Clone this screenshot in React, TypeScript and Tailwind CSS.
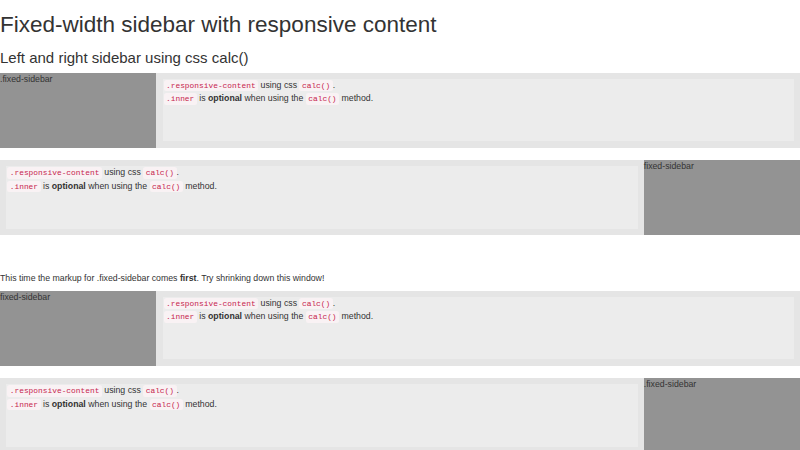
import React from 'react';

const C = ({ children }: { children: React.ReactNode }) => (
    <code className="font-['Liberation_Mono',monospace] text-[7.875px] text-[#c7254e] bg-[#f9f2f4] px-[2.5px] py-[1.25px] rounded-[2.5px]">
        {children}
    </code>
);

function Content() {
    return (
        <div className="flex-1 bg-[#e5e5e5] p-[6.25px]">
            <div className="h-full bg-[#ececec] pl-[1px]">
                <p>
                    <C>.responsive-content</C> using css <C>calc()</C>.
                </p>
                <p>
                    <C>.inner</C> is <b>optional</b> when using the <C>calc()</C> method.
                </p>
            </div>
        </div>
    );
}

function Sidebar({ label }: { label: string }) {
    return <div className="w-[156.25px] shrink-0 bg-[#939393]">{label}</div>;
}

export default function App() {
    return (
        <div className="min-h-[450px] bg-white text-[#333] font-['Liberation_Sans',Arial,sans-serif] text-[8.75px] leading-[12.5px]">
            <h1 className="text-[22.5px] leading-[24.75px] pt-[12.5px] mb-[12.5px]">
                Fixed-width sidebar with responsive content
            </h1>
            <h3 className="text-[15px] leading-[16.5px] mb-[6.25px]">Left and right sidebar using css calc()</h3>

            {/* sidebar on the left */}
            <div className="flex h-[75px] mb-[12.5px]">
                <Sidebar label=".fixed-sidebar" />
                <Content />
            </div>

            {/* sidebar on the right */}
            <div className="flex h-[75px]">
                <Content />
                <Sidebar label="fixed-sidebar" />
            </div>

            <p className="mt-[36.75px] mb-[6.25px]">
                This time the markup for .fixed-sidebar comes <b>first</b>. Try shrinking down this window!
            </p>

            <div className="flex h-[75px] mb-[12.5px]">
                <Sidebar label="fixed-sidebar" />
                <Content />
            </div>

            <div className="flex h-[75px]">
                <Content />
                <Sidebar label=".fixed-sidebar" />
            </div>
        </div>
    );
}
